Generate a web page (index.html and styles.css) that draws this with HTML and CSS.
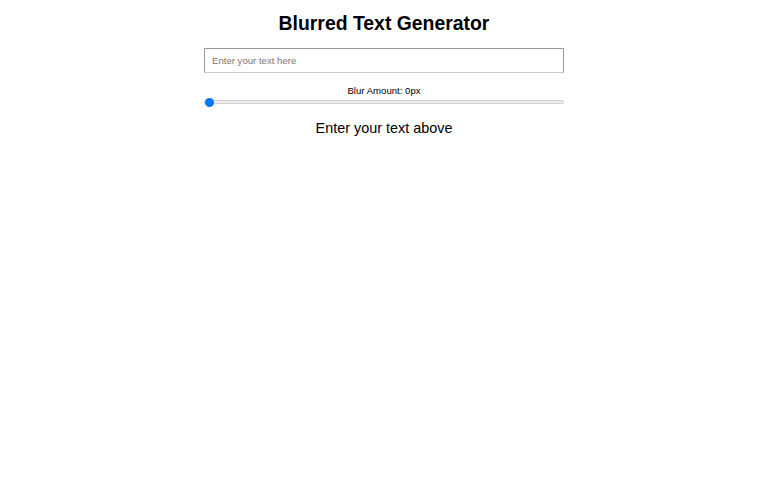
FILE: index.html
```html
<!DOCTYPE html>
<html lang="en">

<head>
  <meta charset="UTF-8">
  <meta name="viewport" content="width=device-width, initial-scale=1.0">
  <title>Blurred Text Generator</title>
  <link rel="stylesheet" href="styles.css">
</head>

<body>
  <div class="generator">
    <h1 class="title">Blurred Text Generator</h1>
    <input type="text" class="text-input" placeholder="Enter your text here">
    <label class="blur-label" for="blur">Blur Amount: <span class="blur-value">0</span>px</label>
    <input type="range" id="blur" class="blur-range" min="0" max="20" value="0">
    <div class="output">Enter your text above</div>
  </div>
  <script>
    var input = document.querySelector(".text-input");
    var range = document.querySelector(".blur-range");
    var valueEl = document.querySelector(".blur-value");
    var output = document.querySelector(".output");

    function update() {
      output.textContent = input.value || "Enter your text above";
      valueEl.textContent = range.value;
      output.style.filter = "blur(" + range.value + "px)";
    }

    input.addEventListener("input", update);
    range.addEventListener("input", update);
  </script>
</body>

</html>
```

FILE: styles.css
```css
body {
  margin: 8px;
  font-family: "Liberation Sans", Arial, sans-serif;
  color: #000;
  background: #fff;
}

.generator {
  width: 360px;
  margin: 0 auto;
  display: flex;
  flex-direction: column;
  align-items: center;
}

.title {
  font-size: 19.4px;
  margin: 4px 0 13px;
}

.text-input {
  width: 100%;
  box-sizing: border-box;
  height: 25px;
  padding: 0 7px;
  font-family: inherit;
  font-size: 9.6px;
  border: 1px solid #999;
  border-bottom-color: #ccc;
}

.text-input::placeholder {
  color: #777;
}

.blur-label {
  margin-top: 12px;
  font-size: 9.6px;
}

/* small slider: thin grey track, blue round thumb */
.blur-range {
  -webkit-appearance: none;
  appearance: none;
  width: 100%;
  height: 10px;
  margin: 1px 0 0;
  background: transparent;
}

.blur-range::-webkit-slider-runnable-track {
  height: 4px;
  background: #ececec;
  border: 1px solid #d2d2d2;
  border-radius: 2px;
  box-sizing: border-box;
}

.blur-range::-webkit-slider-thumb {
  -webkit-appearance: none;
  width: 9px;
  height: 9px;
  margin-top: -3.5px;
  border-radius: 50%;
  background: #0075ff;
  border: none;
}

.output {
  margin-top: 13px;
  font-size: 14.4px;
}
```
